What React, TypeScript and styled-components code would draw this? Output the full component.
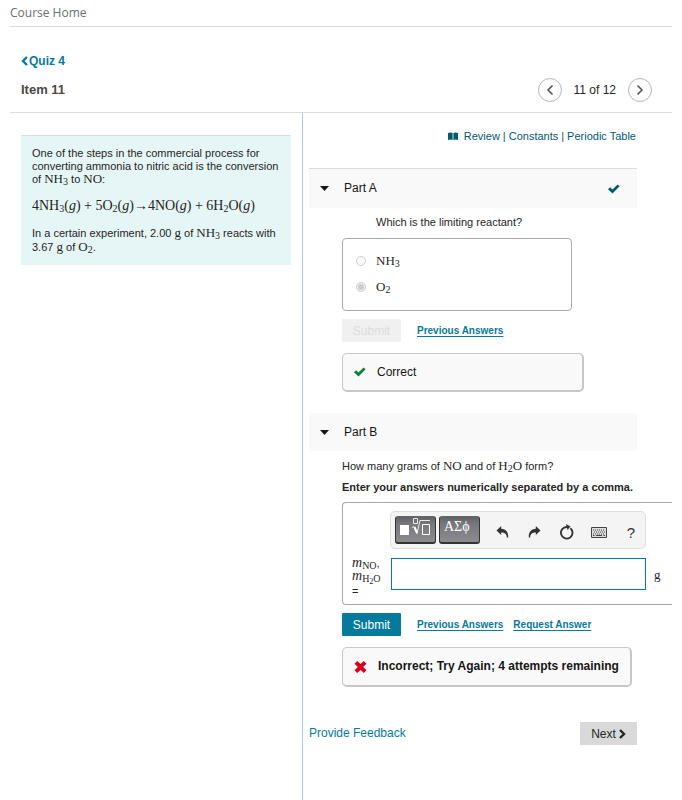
import React from "react";
import styled, { createGlobalStyle, css } from "styled-components";

const GlobalStyle = createGlobalStyle`
  * { box-sizing: border-box; }
  body {
    margin: 0;
    background: #fff;
    color: #252525;
    font-family: "Liberation Sans", Arial, sans-serif;
    font-size: 11px;
    line-height: 13px;
  }
  button, input { font-family: inherit; }
  p { margin: 0; }
`;

const Page = styled.div`
  min-height: 100vh;
  padding: 0 10px;
  display: flex;
  flex-direction: column;
`;

const TopBar = styled.nav`
  height: 27px;
  padding-bottom: 1px;
  border-bottom: 1px solid #dcdcdc;
  display: flex;
  align-items: center;
`;

const HomeLink = styled.a`
  font: 12px/16px "Open Sans", "Noto Sans", sans-serif;
  color: #6a7070;
  text-decoration: none;
`;

const Header = styled.header`
  height: 86px;
  padding: 26px 20px 10px 11px;
  border-bottom: 1px solid #dcdcdc;
  display: flex;
  justify-content: space-between;
  align-items: flex-end;
`;

const Titles = styled.div`
  align-self: flex-start;
  display: flex;
  flex-direction: column;
  gap: 13px;
`;

const BackLink = styled.a`
  display: flex;
  align-items: center;
  gap: 1px;
  font-size: 12px;
  line-height: 16px;
  font-weight: bold;
  color: #047a9c;
  text-decoration: none;
`;

const ItemTitle = styled.h1`
  margin: 0;
  font-size: 13px;
  line-height: 16px;
  color: #4a4a4a;
`;

const Pager = styled.div`
  display: flex;
  align-items: center;
  gap: 12px;
  font-size: 12px;
`;

const RoundButton = styled.button`
  width: 24px;
  height: 24px;
  padding: 0;
  border: 1px solid #b5b5b5;
  border-radius: 50%;
  background: #fff;
  color: #555;
  display: grid;
  place-items: center;
`;

const Columns = styled.main`
  flex: 1;
  display: grid;
  grid-template-columns: minmax(0, 292fr) minmax(0, 370fr);
`;

const Problem = styled.section`
  padding: 22px 11px;
`;

const ProblemBox = styled.div`
  padding: 11px;
  border-top: 1px solid #d5dfe0;
  background: #e6f6f6;
  display: flex;
  flex-direction: column;
  gap: 13px;
`;

const Paragraph = styled.p<{ $loose?: boolean }>`
  line-height: ${(p) => (p.$loose ? 14 : 13)}px;
`;

const MathText = styled.span<{ $large?: boolean }>`
  font-family: "Liberation Serif", "Times New Roman", serif;
  font-size: ${(p) => (p.$large ? 14 : 13)}px;
  line-height: 10px;
  white-space: nowrap;
  sub {
    font-size: 10px;
    line-height: 6px;
    vertical-align: -2px;
  }
  sub sub { font-size: 8px; }
`;

const Work = styled.section`
  padding: 15px 35px 55px 6px;
  border-left: 1px solid #b4c7d6;
`;

const Resources = styled.div`
  height: 40px;
  padding-right: 1px;
  display: flex;
  align-items: flex-start;
  justify-content: flex-end;
  gap: 3px;
  line-height: 16px;
  color: #005a70;
  svg { margin: 4px 3px 0 0; }
`;

const ResourceLink = styled.a`
  color: #005a70;
  text-decoration: none;
`;

const PartHeader = styled.h2<{ $ruled?: boolean }>`
  margin: 0;
  height: ${(p) => (p.$ruled ? 40 : 38)}px;
  padding: 0 17px 0 11px;
  border-top: ${(p) => (p.$ruled ? "1px solid #dcdcdc" : "0")};
  background: #f9f9f9;
  display: flex;
  align-items: center;
  gap: 15px;
  font-size: 12px;
  font-weight: normal;
  color: #151515;
`;

const PartName = styled.span`
  flex: 1;
`;

const PartBody = styled.div`
  padding-left: 33px;
`;

const Question = styled.p`
  padding: 8px 0 9px 34px;
`;

const Choices = styled.fieldset`
  width: 78%;
  margin: 0;
  height: 73px;
  padding: 12px 13px;
  border: 1px solid #a9a9a9;
  border-radius: 4px;
  display: flex;
  flex-direction: column;
  gap: 6px;
`;

const Choice = styled.label`
  display: flex;
  align-items: center;
  gap: 10px;
  height: 20px;
`;

const Radio = styled.input`
  appearance: none;
  flex: none;
  width: 10px;
  height: 10px;
  margin: 0;
  border: 1px solid #cfcfcf;
  border-radius: 50%;
  background: #fafafa;
  &:checked {
    background: #cbcbcb;
    box-shadow: inset 0 0 0 1px #fafafa;
  }
`;

const Actions = styled.div`
  display: flex;
  align-items: center;
  gap: 10px;
  margin: 8px 0 11px;
`;

const Submit = styled.button`
  width: 59px;
  height: 23px;
  margin-right: 6px;
  padding: 0;
  border: 0;
  border-radius: 1px;
  background: #047a9c;
  color: #fff;
  font-size: 12px;
  &:disabled {
    background: #f0f0f0;
    color: #dcdcdc;
  }
`;

const ActionLink = styled.a`
  font-size: 10px;
  font-weight: bold;
  color: #047a9c;
  text-underline-offset: 2px;
`;

const Feedback = styled.div<{ $wrong?: boolean }>`
  height: ${(p) => (p.$wrong ? 40 : 39)}px;
  padding: 0 11px;
  border: 1px solid #c7c7c7;
  border-width: 1px 2px 2px 1px;
  border-radius: 5px;
  background: #f9f9f9;
  display: flex;
  align-items: center;
  gap: 11px;
  font-size: 12px;
  color: #151515;
  ${(p) =>
    p.$wrong
      ? css`width: fit-content; white-space: nowrap;`
      : css`width: 82%;`}
`;

const Instructions = styled.div`
  padding: 9px 0 8px;
  display: flex;
  flex-direction: column;
  gap: 8px;
`;

const AnswerBox = styled.div`
  margin-right: -35px;
  height: 103px;
  padding: 8px 0 0 9px;
  border: 1px solid #a9a9a9;
  border-right: 0;
  border-radius: 4px 0 0 4px;
  display: grid;
  grid-template-columns: 39px minmax(0, 1fr) 26px;
  grid-template-rows: 38px 40px;
  row-gap: 7px;
`;

const Toolbar = styled.div`
  grid-row: 1;
  grid-column: 2;
  margin-left: -1px;
  padding-left: 4px;
  border: 1px solid #dedede;
  border-radius: 5px;
  background: #f4f4f4;
  display: flex;
  align-items: center;
  gap: 3px;
`;

const PaletteButton = styled.button`
  width: 41px;
  height: 28px;
  flex: none;
  padding: 0 4px 5px;
  border: 1px solid #333;
  border-width: 1px 1px 2px;
  border-top-color: #666;
  border-radius: 3px;
  background: linear-gradient(#626266, #77777b 25%, #8b8b90);
  color: #fff;
  font: 14px/16px "Liberation Serif", serif;
  display: grid;
  align-items: center;
  justify-content: start;
`;

const ToolIcons = styled.div`
  flex: 1;
  padding: 4px 0 0 5px;
  display: flex;
  justify-content: space-between;
`;

const ToolButton = styled.button`
  width: 28px;
  height: 20px;
  padding: 0;
  border: 0;
  background: none;
  color: #333;
  font-size: 15px;
  display: grid;
  place-items: center;
`;

const AnswerLabel = styled.label`
  grid-row: 2;
  grid-column: 1;
  padding-top: 1px;
  line-height: 13px;
  white-space: nowrap;
`;

const AnswerInput = styled.input`
  grid-row: 2;
  grid-column: 2;
  width: 100%;
  height: 32px;
  margin-top: 2px;
  padding: 0 6px;
  border: 1px solid #047a9c;
  border-radius: 0;
  font-size: 12px;
`;

const Unit = styled.span`
  grid-row: 2;
  grid-column: 3;
  padding: 13px 0 0 8px;
`;

const Footer = styled.footer`
  margin-top: 35px;
  display: flex;
  align-items: center;
  justify-content: space-between;
`;

const FeedbackLink = styled.a`
  font-size: 12px;
  color: #047a9c;
  text-decoration: none;
`;

const NextButton = styled.button`
  width: 57px;
  height: 23px;
  padding: 0;
  border: 0;
  background: #d9d9d9;
  color: #252525;
  font-size: 12px;
  display: flex;
  align-items: center;
  justify-content: center;
  gap: 3px;
`;

const PartDivider = styled.div`
  height: 21px;
`;

const BoldChevron = ({ left = false }: { left?: boolean }) => (
  <svg width="7" height="10" viewBox="0 0 7 10" fill="none" stroke="currentColor" strokeWidth="2.4">
    <path d={left ? "M6 1 2 5 6 9" : "M1 1 5 5 1 9"} />
  </svg>
);

const ThinChevron = ({ left = false }: { left?: boolean }) => (
  <svg width="8" height="12" viewBox="0 0 8 12" fill="none" stroke="currentColor" strokeWidth="1.6">
    <path d={left ? "M6.5 1.5 2 6 6.5 10.5" : "M1.5 1.5 6 6 1.5 10.5"} />
  </svg>
);

const Book = () => (
  <svg width="10" height="9" viewBox="0 0 10 9" fill="currentColor">
    <path d="M0 1Q2.5 0 4.6 1V8Q2.5 7.2 0 8ZM5.4 1Q7.5 0 10 1V8Q7.5 7.2 5.4 8Z" />
  </svg>
);

const Caret = () => (
  <svg width="9" height="5" viewBox="0 0 9 5" fill="currentColor">
    <path d="M0 0H9L4.5 5Z" />
  </svg>
);

const Check = ({ color }: { color: string }) => (
  <svg width="12" height="10" viewBox="0 0 12 10" fill={color}>
    <path d="M0 5.3 2 3.3 4.5 5.6 9.6 .5 11.6 2.2 4.5 9.4Z" />
  </svg>
);

const Cross = () => (
  <svg width="13" height="12" viewBox="0 0 13 12" fill="#db0020">
    <path d="M3.2 0 6.5 3.1 9.8 0 12.5 2.7 9.2 6 12.5 9.3 9.8 12 6.5 8.9 3.2 12 .5 9.3 3.8 6 .5 2.7Z" />
  </svg>
);

const TemplateIcon = () => (
  <svg width="32" height="20" viewBox="0 0 32 20" fill="none" stroke="#fff">
    <path d="M0 8h9v10H0z" fill="#fff" stroke="none" />
    <path d="M13.5 1.5h4v5h-4zM12 10.5l2-1 3 7 3-13h10" strokeWidth="1" opacity=".85" />
    <path d="M14.5 10l2.5 6" strokeWidth="2" />
    <path d="M22.5 7.5h7v10h-7z" />
  </svg>
);

const Arrow = ({ redo = false }: { redo?: boolean }) => (
  <svg width="13" height="12" viewBox="0 0 13 12" fill="currentColor">
    <path
      d={
        redo
          ? "M12.5 4.5 7.8 0V2.7C3 3 .5 6 .8 11.5H2.2C2.2 8 4 6.5 7.8 6.5V9Z"
          : "M.5 4.5 5.2 0V2.7C10 3 12.5 6 12.2 11.5H10.8C10.8 8 9 6.5 5.2 6.5V9Z"
      }
    />
  </svg>
);

const Reset = () => (
  <svg width="14" height="16" viewBox="0 0 14 16" fill="none" stroke="currentColor" strokeWidth="1.8">
    <path d="M10.4 4.3A5.8 5.8 0 1 1 7 3" />
    <path d="M6 0 10.5 2.6 7.5 6Z" fill="currentColor" stroke="none" />
  </svg>
);

const Keyboard = () => (
  <svg width="16" height="11" viewBox="0 0 16 11" fill="none" stroke="#444">
    <path d="M.5 .5h15v10H.5z" fill="#ddd" />
    <path d="M2 3h12M3 5h11M2 7h12" strokeWidth="1" strokeDasharray="1 1" />
    <path d="M2 8.5h1.5M5 8.5h6M12.5 8.5H14" />
  </svg>
);

export default function App() {
  return (
    <Page>
      <GlobalStyle />
      <TopBar>
        <HomeLink href="#">Course Home</HomeLink>
      </TopBar>
      <Header>
        <Titles>
          <BackLink href="#"><BoldChevron left />Quiz 4</BackLink>
          <ItemTitle>Item 11</ItemTitle>
        </Titles>
        <Pager>
          <RoundButton aria-label="Previous item"><ThinChevron left /></RoundButton>
          <span>11 of 12</span>
          <RoundButton aria-label="Next item"><ThinChevron /></RoundButton>
        </Pager>
      </Header>

      <Columns>
        <Problem>
          <ProblemBox>
            <Paragraph>
              One of the steps in the commercial process for converting ammonia to nitric acid is the
              conversion of <MathText>NH<sub>3</sub></MathText> to <MathText>NO</MathText>:
            </Paragraph>
            <Paragraph $loose>
              <MathText $large>
                4NH<sub>3</sub>(<i>g</i>) + 5O<sub>2</sub>(<i>g</i>)→4NO(<i>g</i>) + 6H<sub>2</sub>O(<i>g</i>)
              </MathText>
            </Paragraph>
            <Paragraph $loose>
              In a certain experiment, 2.00 <MathText>g</MathText> of <MathText>NH<sub>3</sub></MathText>{" "}
              reacts with 3.67 <MathText>g</MathText> of <MathText>O<sub>2</sub></MathText>.
            </Paragraph>
          </ProblemBox>
        </Problem>

        <Work>
          <Resources>
            <Book />
            <ResourceLink href="#">Review</ResourceLink>|
            <ResourceLink href="#">Constants</ResourceLink>|
            <ResourceLink href="#">Periodic Table</ResourceLink>
          </Resources>

          <PartHeader $ruled>
            <Caret />
            <PartName>Part A</PartName>
            <Check color="#005a70" />
          </PartHeader>
          <PartBody>
            <Question>Which is the limiting reactant?</Question>
            <Choices aria-label="Limiting reactant">
              <Choice>
                <Radio type="radio" name="reactant" disabled />
                <MathText>NH<sub>3</sub></MathText>
              </Choice>
              <Choice>
                <Radio type="radio" name="reactant" defaultChecked disabled />
                <MathText>O<sub>2</sub></MathText>
              </Choice>
            </Choices>
            <Actions>
              <Submit disabled>Submit</Submit>
              <ActionLink href="#">Previous Answers</ActionLink>
            </Actions>
            <Feedback>
              <Check color="#038238" />
              Correct
            </Feedback>
          </PartBody>
          <PartDivider />

          <PartHeader>
            <Caret />
            <PartName>Part B</PartName>
          </PartHeader>
          <PartBody>
            <Instructions>
              <p>
                How many grams of <MathText>NO</MathText> and of <MathText>H<sub>2</sub>O</MathText> form?
              </p>
              <b>Enter your answers numerically separated by a comma.</b>
            </Instructions>
            <AnswerBox>
              <Toolbar>
                <PaletteButton aria-label="Templates"><TemplateIcon /></PaletteButton>
                <PaletteButton>ΑΣϕ</PaletteButton>
                <ToolIcons>
                  <ToolButton aria-label="Undo"><Arrow /></ToolButton>
                  <ToolButton aria-label="Redo"><Arrow redo /></ToolButton>
                  <ToolButton aria-label="Reset"><Reset /></ToolButton>
                  <ToolButton aria-label="Keyboard shortcuts"><Keyboard /></ToolButton>
                  <ToolButton>?</ToolButton>
                </ToolIcons>
              </Toolbar>
              <AnswerLabel htmlFor="masses">
                <MathText $large><i>m</i><sub>NO</sub></MathText>,<br />
                <MathText $large><i>m</i><sub>H<sub>2</sub>O</sub></MathText><br />=
              </AnswerLabel>
              <AnswerInput id="masses" type="text" />
              <Unit><MathText>g</MathText></Unit>
            </AnswerBox>
            <Actions>
              <Submit>Submit</Submit>
              <ActionLink href="#">Previous Answers</ActionLink>
              <ActionLink href="#">Request Answer</ActionLink>
            </Actions>
            <Feedback $wrong>
              <Cross />
              <b>Incorrect; Try Again; 4 attempts remaining</b>
            </Feedback>
          </PartBody>

          <Footer>
            <FeedbackLink href="#">Provide Feedback</FeedbackLink>
            <NextButton>Next <BoldChevron /></NextButton>
          </Footer>
        </Work>
      </Columns>
    </Page>
  );
}
